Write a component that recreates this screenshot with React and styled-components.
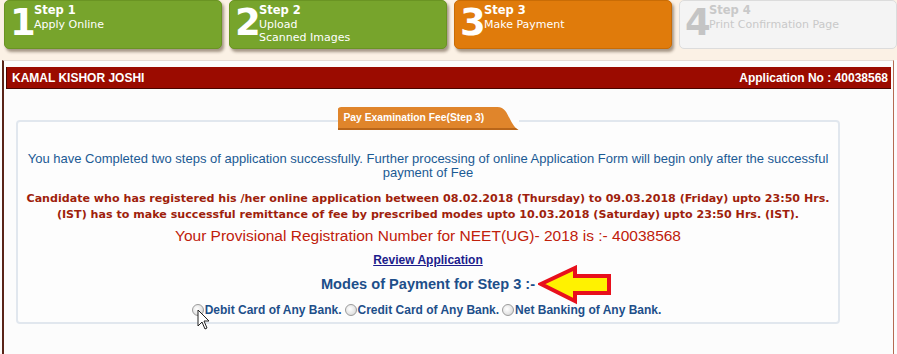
import React from 'react';
import styled, { createGlobalStyle } from 'styled-components';

const GlobalStyle = createGlobalStyle`
  html, body {
    margin: 0;
    padding: 0;
    background: #fcfcfc;
    font-family: "Liberation Sans", Arial, sans-serif;
  }
`;

const Page = styled.div`
  width: 897px;
  height: 354px;
  overflow: hidden;
`;

const StepStrip = styled.div`
  background: #fbf1e5;
  height: 60px;
  display: flex;
  gap: 7px;
  padding-left: 4px;
  box-sizing: border-box;
`;

const stepColors = {
  done: { bg: '#77a42c', border: '#6a9423', text: '#fff', num: '#fff' },
  active: { bg: '#e07b0b', border: '#c96c05', text: '#fff', num: '#fff' },
  todo: { bg: '#f4f4f4', border: '#dcdcdc', text: '#c9c9c9', num: '#c4c4c4' },
};

const StepBox = styled.div`
  width: 218px;
  height: 49px;
  flex: none;
  box-sizing: border-box;
  background: ${p => stepColors[p.$state].bg};
  border: 1px solid ${p => stepColors[p.$state].border};
  border-radius: 5px;
  box-shadow: ${p => (p.$state === 'todo' ? 'none' : '2px 3px 3px rgba(60,40,20,0.45)')};
  display: flex;
  align-items: flex-start;
  padding: 3px 0 0 5px;
  color: ${p => stepColors[p.$state].text};
  font-family: "DejaVu Sans", Verdana, sans-serif;
`;

const StepNum = styled.div`
  font-size: 37px;
  font-weight: bold;
  line-height: 36px;
  margin-top: 1px;
  width: 24px;
  letter-spacing: -1px;
  color: ${p => stepColors[p.$state].num};
`;

const StepText = styled.div`
  font-size: 11px;
  line-height: 13.5px;
  b {
    display: block;
    font-size: 11.5px;
  }
`;

const Frame = styled.div`
  margin-left: 2px;
  width: 892px;
  box-sizing: border-box;
  border-top: 1px solid #e6dcd6;
  border-left: 2px solid #5a2418;
  border-right: 1px solid #b56a52;
  padding: 6px 2px 0 2px;
  height: 300px;
`;

const HeaderBar = styled.div`
  height: 21px;
  background: #9b0b00;
  border-bottom: 1px solid #4a0500;
  border-left: 1px solid #4a0500;
  display: flex;
  justify-content: space-between;
  align-items: center;
  padding: 0 3px 0 5px;
  color: #fff;
  font-size: 12px;
  font-weight: bold;
`;

const FeeBox = styled.fieldset`
  margin: 20px 0 0 10px;
  width: 824px;
  box-sizing: border-box;
  border: 2px solid #e1e7ee;
  border-radius: 4px;
  padding: 20px 6px 4px 6px;
  text-align: center;
  background: #fdfdfd;
`;

const Tab = styled.legend`
  margin: 0 auto;
  width: 181px;
  box-sizing: border-box;
  padding: 0 0 0 6px;
  height: 23px;
  line-height: 22px;
  position: relative;
  top: -2px;
  background: #e0852b;
  color: #fff;
  font-size: 10.3px;
  font-weight: bold;
  text-align: left;
  clip-path: path('M0 4 Q0 0 4 0 L160 0 C168 0 170 8 174 15 C177 20 179 22 181 23 L0 23 Z');
  box-shadow: inset 0 -2px 0 #b9661a;
`;

const Note = styled.p`
  margin: 0;
  color: ${p => p.$color};
  font-size: ${p => p.$size}px;
  line-height: ${p => p.$lh}px;
  font-weight: ${p => (p.$bold ? 'bold' : 'normal')};
  font-family: ${p => (p.$verdana ? '"DejaVu Sans", Verdana, sans-serif' : '"Liberation Sans", Arial, sans-serif')};
  margin-top: ${p => p.$top || 0}px;
  white-space: nowrap;
`;

const ReviewLink = styled.a`
  color: #1c1c8c;
  font-weight: bold;
  text-decoration: underline;
`;

const Pointed = styled.span`
  position: relative;
  display: inline-block;
`;

const Arrow = styled.svg`
  position: absolute;
  left: 100%;
  top: -9px;
  margin-left: 3px;
`;

const Options = styled.div`
  margin-top: 8px;
  display: flex;
  justify-content: center;
  align-items: center;
  font-size: 12px;
  line-height: 16px;
  font-weight: bold;
  color: #1d4f8a;
  position: relative;
`;

const Option = styled.label`
  display: inline-flex;
  align-items: center;
  margin-right: 3px;
`;

const Radio = styled.span`
  width: 10px;
  height: 10px;
  border-radius: 50%;
  border: 1px solid #9c9c9c;
  background: radial-gradient(circle at 40% 40%, #ffffff 0%, #e4e4e4 60%, #c8c8c8 100%);
  margin-right: 1px;
  display: inline-block;
`;

const Cursor = styled.svg`
  position: absolute;
  top: 7px;
`;

const steps = [
  { state: 'done', n: '1', title: 'Step 1', lines: ['Apply Online'] },
  { state: 'done', n: '2', title: 'Step 2', lines: ['Upload', 'Scanned Images'] },
  { state: 'active', n: '3', title: 'Step 3', lines: ['Make Payment'] },
  { state: 'todo', n: '4', title: 'Step 4', lines: ['Print Confirmation Page'] },
];

const options = ['Debit Card of Any Bank.', 'Credit Card of Any Bank.', 'Net Banking of Any Bank.'];

export default function App() {
  return (
    <Page>
      <GlobalStyle />
      <StepStrip>
        {steps.map(s => (
          <StepBox key={s.n} $state={s.state}>
            <StepNum $state={s.state}>{s.n}</StepNum>
            <StepText>
              <b>{s.title}</b>
              {s.lines.map(l => (
                <div key={l}>{l}</div>
              ))}
            </StepText>
          </StepBox>
        ))}
      </StepStrip>
      <Frame>
        <HeaderBar>
          <span>KAMAL KISHOR JOSHI</span>
          <span>Application No : 40038568</span>
        </HeaderBar>
        <FeeBox>
          <Tab>Pay Examination Fee(Step 3)</Tab>
          <Note $color="#1b5a94" $size={13} $lh={14}>
            You have Completed two steps of application successfully. Further processing of online Application Form will begin only after the successful
            <br />
            payment of Fee
          </Note>
          <Note $color="#9f1f0c" $size={11.1} $lh={16} $bold $verdana $top={11}>
            Candidate who has registered his /her online application between 08.02.2018 (Thursday) to 09.03.2018 (Friday) upto 23:50 Hrs.
            <br />
            (IST) has to make successful remittance of fee by prescribed modes upto 10.03.2018 (Saturday) upto 23:50 Hrs. (IST).
          </Note>
          <Note $color="#c0200b" $size={15.5} $lh={20} $top={3}>
            Your Provisional Registration Number for NEET(UG)- 2018 is :- 40038568
          </Note>
          <Note $size={12} $lh={16} $top={6}>
            <ReviewLink href="#">Review Application</ReviewLink>
          </Note>
          <Note $color="#1d4f8a" $size={14.6} $lh={20} $bold $top={6}>
            <Pointed>
              Modes of Payment for Step 3 :-
              <Arrow width="76" height="40" viewBox="0 0 76 40">
                <polygon
                  points="3,19 37,3 37,11 71,11 71,28 37,28 37,36"
                  fill="#fff200"
                  stroke="#e8101c"
                  strokeWidth="4"
                  strokeLinejoin="miter"
                />
              </Arrow>
            </Pointed>
          </Note>
          <Options>
            {options.map(o => (
              <Option key={o}>
                <Radio />
                {o}
              </Option>
            ))}
            <Cursor width="14" height="22" viewBox="0 0 14 22" style={{ left: 173 }}>
              <path d="M1 1 L1 17 L5 13 L8 20 L10 19 L7 12 L12 12 Z" fill="#fff" stroke="#222" strokeWidth="1" />
            </Cursor>
          </Options>
        </FeeBox>
      </Frame>
    </Page>
  );
}
